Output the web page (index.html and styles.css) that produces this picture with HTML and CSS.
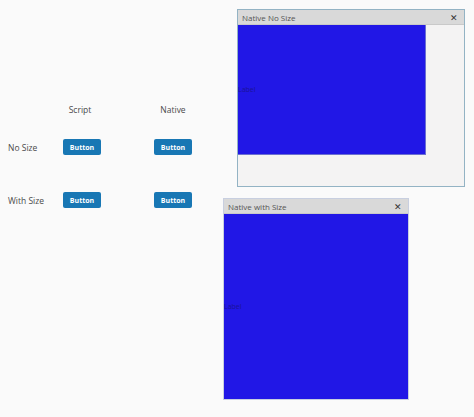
FILE: index.html
```html
<!DOCTYPE html>
<html>
<head>
<meta charset="utf-8">
<link rel="stylesheet" href="styles.css">
</head>
<body>
<div class="panel">
  <div class="row head">
    <div class="lbl"></div>
    <div class="cell first">Script</div>
    <div class="cell">Native</div>
  </div>
  <div class="row r1">
    <div class="lbl">No Size</div>
    <div class="cell"><button class="btn">Button</button></div>
    <div class="cell"><button class="btn">Button</button></div>
  </div>
  <div class="row r2">
    <div class="lbl">With Size</div>
    <div class="cell"><button class="btn">Button</button></div>
    <div class="cell"><button class="btn">Button</button></div>
  </div>
</div>

<div class="win w1">
  <div class="title"><span>Native No Size</span><span class="x">✕</span></div>
  <div class="body">
    <div class="content c1"><span class="label">Label</span></div>
  </div>
</div>

<div class="win w2">
  <div class="title"><span>Native with Size</span><span class="x">✕</span></div>
  <div class="body">
    <div class="content c2"><span class="label">Label</span></div>
  </div>
</div>
</body>
</html>
```
FILE: styles.css
```css
html, body {
  margin: 0;
  padding: 0;
  background: #fafafa;
  font-family: "Open Sans", "Liberation Sans", sans-serif;
  color: #4a4a4a;
}
.panel {
  padding: 101px 0 0 8px;
  display: flex;
  flex-direction: column;
}
.row {
  display: flex;
  align-items: center;
  height: 16px;
  font-size: 8.5px;
}
.r1 { margin-top: 22px; }
.r2 { margin-top: 37px; }
.lbl { width: 55px; }
.cell {
  width: 38px;
  display: flex;
  justify-content: center;
  white-space: nowrap;
}
.cell + .cell { margin-left: 53px; }
.head .first { position: relative; left: -2px; }
.btn {
  width: 38px;
  height: 16px;
  border: none;
  border-radius: 2px;
  background: #1877b4;
  color: #fff;
  font-family: "Open Sans", "Liberation Sans", sans-serif;
  font-weight: 700;
  font-size: 7px;
  padding: 0;
}
.win {
  position: absolute;
  box-sizing: border-box;
  border: 1px solid #93b3c4;
  background: #f4f3f3;
  display: flex;
  flex-direction: column;
}
.w1 { left: 237px; top: 9px; width: 228px; height: 178px; }
.w2 { left: 223px; top: 198px; width: 186px; height: 202px; border-color: #c8cfe0; }
.title {
  height: 14px;
  flex: none;
  background: #d9d9d9;
  display: flex;
  align-items: center;
  justify-content: space-between;
  padding: 0 6px 0 4px;
  font-size: 8px;
  color: #555;
  border-bottom: 1px solid #c9c9c9;
}
.x { font-size: 9px; color: #333; }
.body { flex: 1; display: flex; }
.content {
  background: #2117e6;
  display: flex;
  align-items: center;
}
.c1 { width: 187px; height: 129px; border-right: 1px solid #6b6fd0; border-bottom: 1px solid #6b6fd0; }
.c2 { flex: 1; }
.label {
  font-size: 7px;
  color: #1b1399;
}
```
